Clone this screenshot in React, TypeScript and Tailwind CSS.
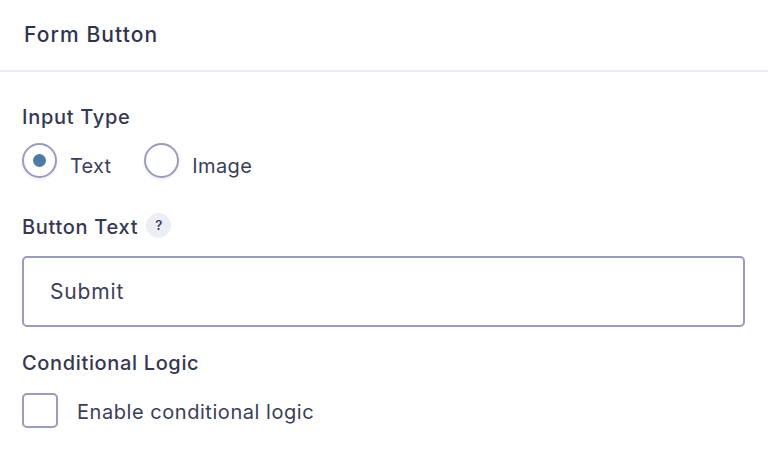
const App = () => {
  return (
    <div className="h-[476px] w-[768px] overflow-hidden bg-white font-['Inter',sans-serif] text-[#3b3e58]">
      <div className="flex h-[72px] items-center border-b-2 border-[#ecedf3] pb-[2px] pl-[24px]">
        <h2 className="text-[21px] font-medium leading-none tracking-[1.1px] text-[#2f3350]">Form Button</h2>
      </div>

      <div className="px-[22px] pt-[33px]">
        <div className="text-[20px] font-medium leading-[24px] tracking-[0.7px] text-[#353850]">Input Type</div>
        <div className="mt-[13px] flex items-center">
          <span className="flex h-[35px] w-[35px] items-center justify-center rounded-full border-2 border-[#9a9cbb] bg-white shadow-[0_2px_3px_rgba(40,40,90,0.08)]">
            <span className="h-[13px] w-[13px] rounded-full bg-[#4d7ba6]" />
          </span>
          <span className="ml-[13px] mt-[12px] text-[20px] leading-[24px] tracking-[0.2px]">Text</span>
          <span className="ml-[33px] h-[35px] w-[35px] rounded-full border-2 border-[#9a9cbb] bg-white shadow-[0_2px_3px_rgba(40,40,90,0.08)]" />
          <span className="ml-[13px] mt-[12px] text-[20px] leading-[24px] tracking-[0.4px]">Image</span>
        </div>

        <div className="mt-[35px] flex items-center">
          <span className="text-[20px] font-medium leading-[24px] tracking-[0.7px] text-[#353850]">Button Text</span>
          <span className="ml-[8px] mb-[3px] flex h-[25px] w-[25px] items-center justify-center rounded-full bg-[#ecedf5] text-[13px] font-semibold text-[#3b3e58]">?</span>
        </div>

        <div className="mt-[15px] flex h-[71px] w-[723px] items-center rounded-[5px] border-2 border-[#9a9cbb] pl-[26px] text-[21px] tracking-[0.85px] text-[#3b3e58]">
          Submit
        </div>

        <div className="mt-[24px] text-[20px] font-medium leading-[24px] tracking-[0.65px] text-[#353850]">Conditional Logic</div>
        <div className="mt-[18px] flex items-center">
          <span className="h-[35px] w-[36px] rounded-[5px] border-2 border-[#9a9cbb] bg-white" />
          <span className="ml-[19px] mt-[3px] text-[20px] leading-[24px] tracking-[0.55px]">Enable conditional logic</span>
        </div>
      </div>
    </div>
  );
};

export default App;
